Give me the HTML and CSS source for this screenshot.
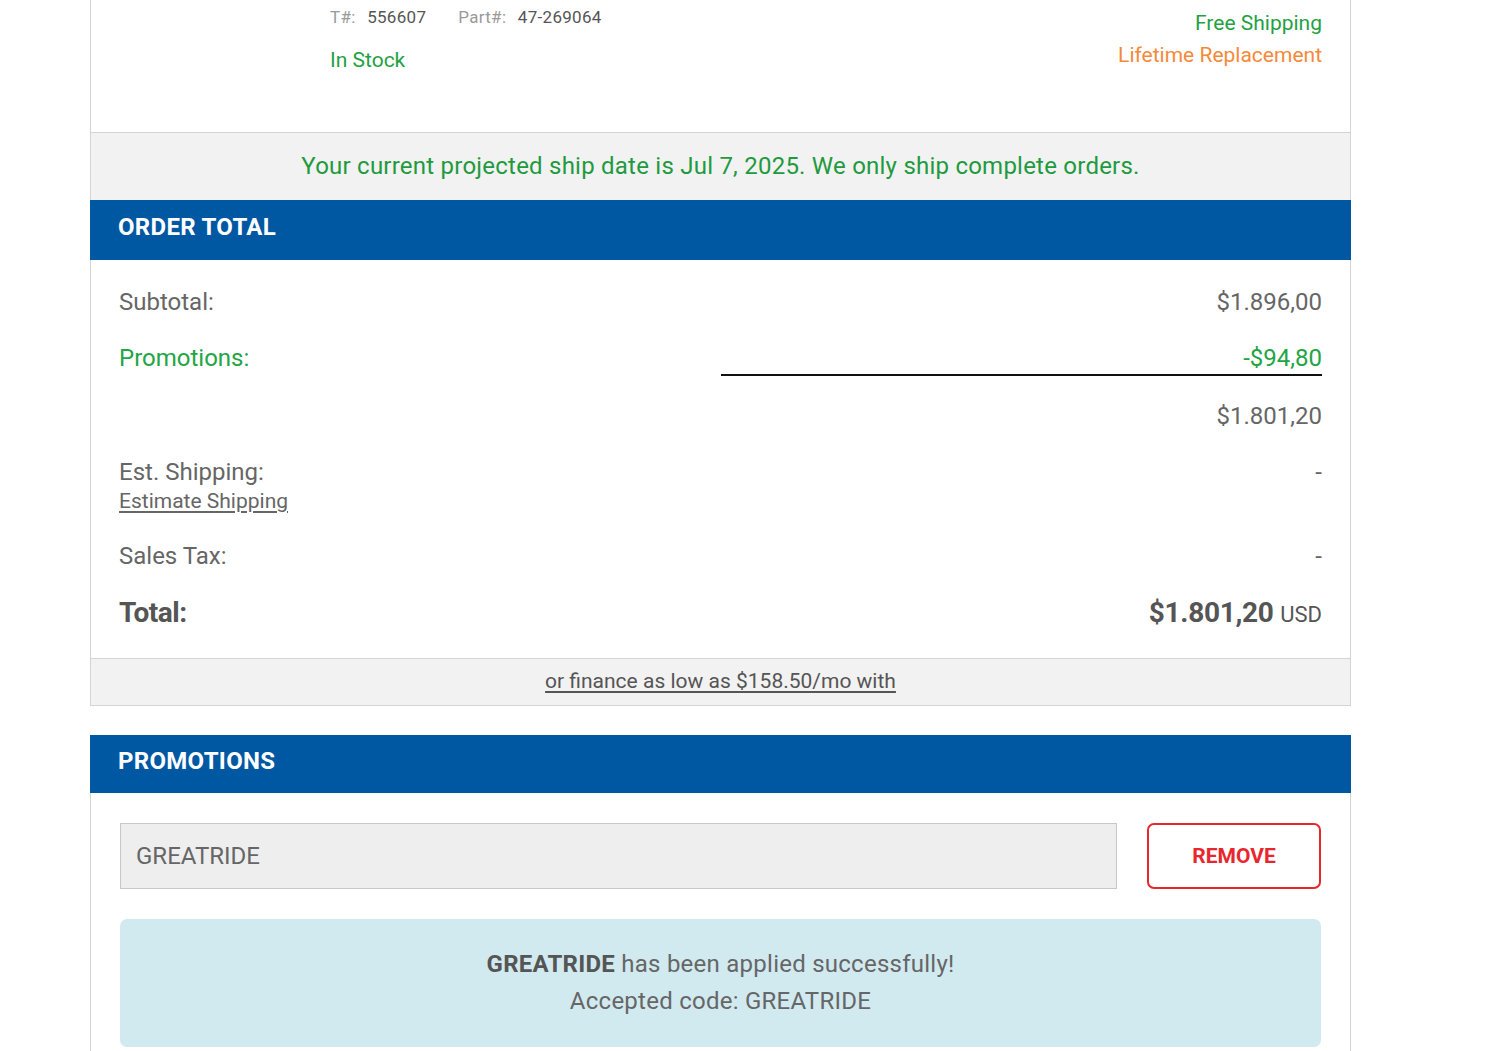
FILE: index.html
```html
<!DOCTYPE html>
<html lang="en">
<head>
<meta charset="utf-8">
<title>Cart</title>
<link rel="stylesheet" href="styles.css">
</head>
<body>
<div class="page">
  <section class="cart">
    <div class="item">
      <div class="item-thumb"></div>
      <div class="item-info">
        <div class="item-ids">
          <span class="id"><span class="id-label">T#:</span> 556607</span>
          <span class="id"><span class="id-label">Part#:</span> 47-269064</span>
        </div>
        <div class="stock">In Stock</div>
      </div>
      <div class="item-perks">
        <div class="perk-ship">Free Shipping</div>
        <div class="perk-life">Lifetime Replacement</div>
      </div>
    </div>
    <div class="ship-date">Your current projected ship date is Jul 7, 2025. We only ship complete orders.</div>
    <h2 class="bar-title">ORDER TOTAL</h2>
    <div class="totals">
      <div class="row">
        <div class="label">Subtotal:</div>
        <div class="value">$1.896,00</div>
      </div>
      <div class="row promo">
        <div class="label">Promotions:</div>
        <div class="value underlined">-$94,80</div>
      </div>
      <div class="row">
        <div class="label"></div>
        <div class="value">$1.801,20</div>
      </div>
      <div class="row">
        <div class="label">Est. Shipping:<a class="est-link" href="#">Estimate Shipping</a></div>
        <div class="value">-</div>
      </div>
      <div class="row">
        <div class="label">Sales Tax:</div>
        <div class="value">-</div>
      </div>
      <div class="row total">
        <div class="label">Total:</div>
        <div class="value">$1.801,20 <span class="cur">USD</span></div>
      </div>
    </div>
    <div class="finance"><a href="#">or finance as low as $158.50/mo with</a></div>
  </section>

  <section class="promos">
    <h2 class="bar-title">PROMOTIONS</h2>
    <div class="promos-body">
      <div class="code-row">
        <div class="code-input">GREATRIDE</div>
        <button class="remove-btn">REMOVE</button>
      </div>
      <div class="alert">
        <div><strong>GREATRIDE</strong> has been applied successfully!</div>
        <div>Accepted code: GREATRIDE</div>
      </div>
    </div>
  </section>
</div>
</body>
</html>
```

FILE: styles.css
```css
* { box-sizing: border-box; }
html, body { margin: 0; padding: 0; background: #fff; }
body {
  font-family: Roboto, "Liberation Sans", Arial, sans-serif;
  color: #666;
  overflow: hidden;
  height: 1051px;
}
.page {
  margin-left: 90px;
  width: 1261px;
}
.cart {
  border: 1px solid #d4d4d4;
  border-top: none;
}
.item {
  display: flex;
  height: 133px;
  border-bottom: 1px solid #d4d4d4;
  padding-right: 28px;
}
.item-thumb { width: 239px; }
.item-info { flex: 1; padding-top: 7px; }
.item-ids {
  display: flex;
  gap: 32px;
  font-size: 17px;
  line-height: 20px;
  letter-spacing: 0.3px;
  color: #555;
}
.id-label { color: #9a9a9a; margin-right: 7px; }
.stock {
  margin-top: 20px;
  font-size: 21px;
  line-height: 26px;
  color: #1fa144;
}
.item-perks {
  text-align: right;
  padding-top: 7px;
  font-size: 21px;
  line-height: 32px;
}
.perk-ship { color: #1fa144; }
.perk-life { color: #f5893a; }
.ship-date {
  background: #f2f2f2;
  height: 67px;
  line-height: 66px;
  text-align: center;
  font-size: 24px;
  color: #1f9a3f;
  letter-spacing: 0.23px;
}
.bar-title {
  margin: 0;
  background: #0058a3;
  color: #fff;
  font-size: 24px;
  font-weight: 700;
  letter-spacing: 0.3px;
  padding-left: 28px;
}
.cart .bar-title {
  margin: 0 -1px;
  height: 60px;
  line-height: 54px;
}
.totals {
  padding: 14px 28px 14px 28px;
}
.row {
  display: grid;
  grid-template-columns: 1fr 1fr;
  padding: 12px 0;
  font-size: 24px;
  line-height: 32px;
}
.value { text-align: right; }
.promo .label, .promo .value { color: #22a544; }
.underlined { border-bottom: 2px solid #111; }
.est-link {
  display: block;
  font-size: 21px;
  line-height: 26px;
  margin-top: 0;
  margin-bottom: 2px;
  color: #666;
  text-decoration: underline;
  text-underline-offset: 3px;
}
.total { line-height: 34px; color: #555; }
.total .label { font-size: 28px; font-weight: 700; letter-spacing: -0.5px; }
.total .value { font-size: 28px; font-weight: 700; letter-spacing: -0.3px; }
.cur { font-size: 22px; font-weight: 400; letter-spacing: 0; }
.finance {
  border-top: 1px solid #d4d4d4;
  background: #f2f2f2;
  height: 47px;
  line-height: 45px;
  text-align: center;
  font-size: 21px;
}
.finance a {
  color: #555;
  text-decoration: underline;
  text-underline-offset: 3px;
  letter-spacing: 0;
}
.promos { margin-top: 29px; }
.promos .bar-title {
  height: 58px;
  line-height: 52px;
}
.promos-body {
  border-left: 1px solid #d4d4d4;
  border-right: 1px solid #d4d4d4;
  padding: 30px 29px 40px 29px;
}
.code-row {
  display: flex;
  gap: 30px;
  height: 66px;
}
.code-input {
  flex: 1;
  background: #eeeeee;
  border: 1px solid #c8c8c8;
  font-size: 24px;
  line-height: 64px;
  padding-left: 15px;
  color: #666;
}
.remove-btn {
  width: 174px;
  background: #fff;
  border: 2px solid #e8262d;
  border-radius: 7px;
  color: #e8262d;
  font-family: Roboto, "Liberation Sans", Arial, sans-serif;
  font-size: 21px;
  font-weight: 700;
  padding: 0;
}
.alert {
  margin-top: 30px;
  background: #d1eaf0;
  border-radius: 7px;
  padding: 27px 0;
  text-align: center;
  font-size: 24px;
  line-height: 37px;
  letter-spacing: 0.25px;
  color: #666;
}
.alert strong { color: #555; }
```
